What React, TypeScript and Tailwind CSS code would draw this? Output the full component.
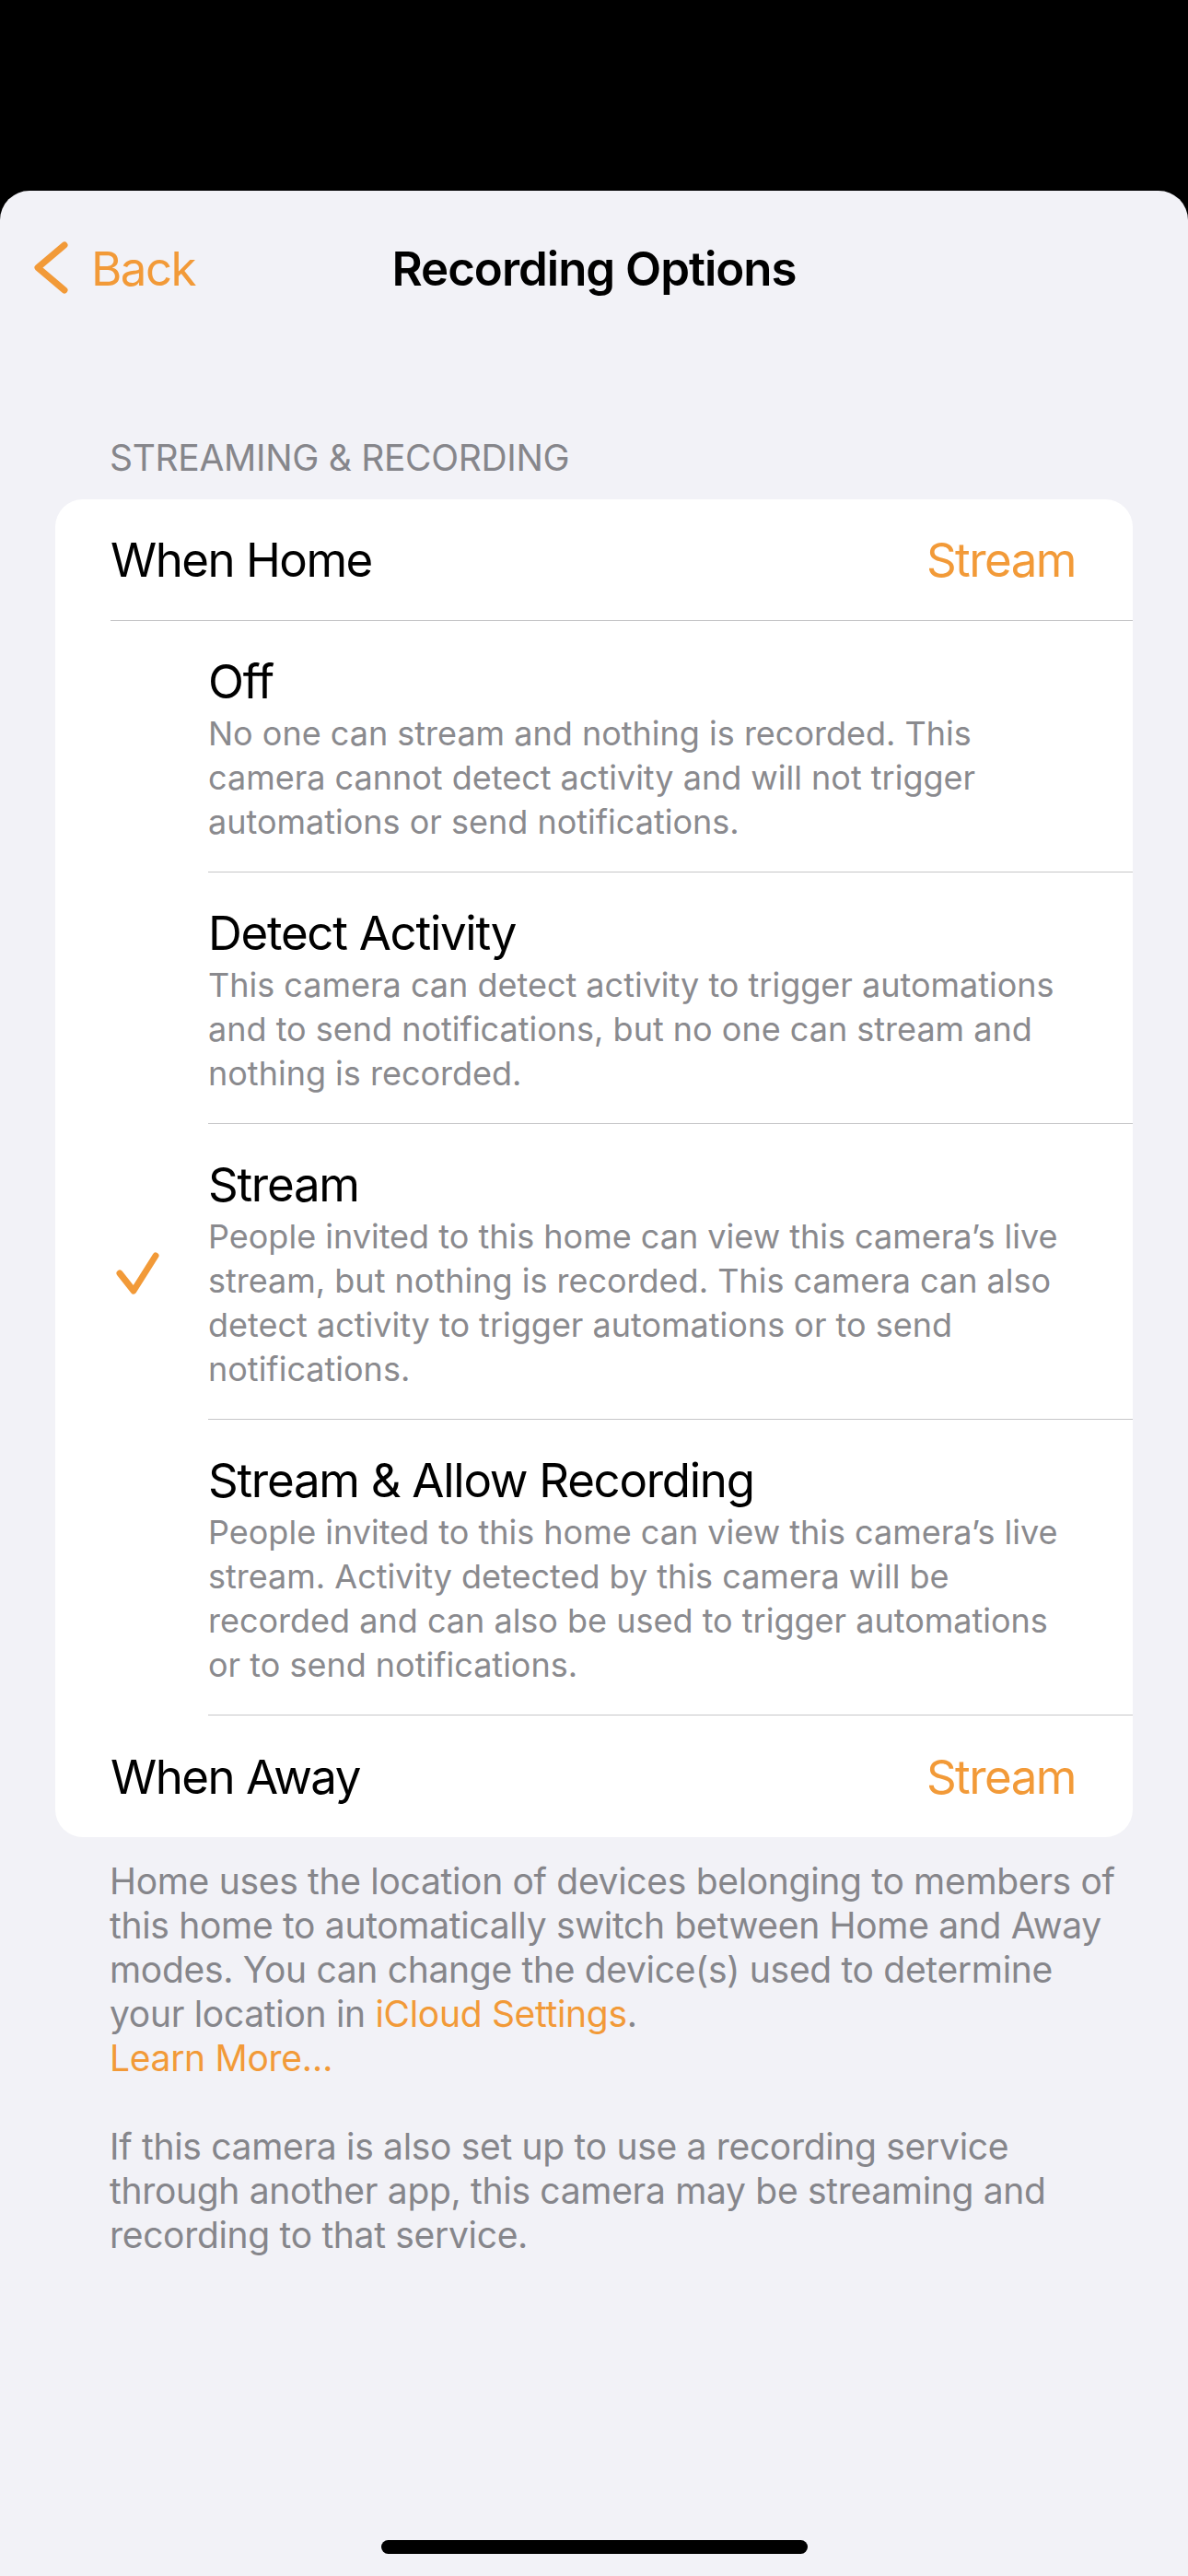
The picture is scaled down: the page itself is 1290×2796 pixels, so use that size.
import React from 'react';

const orange = 'text-[#f29a38]';

type Option = { title: string; lines: string[]; selected?: boolean };

const options: Option[] = [
  {
    title: 'Off',
    lines: [
      'No one can stream and nothing is recorded. This',
      'camera cannot detect activity and will not trigger',
      'automations or send notifications.',
    ],
  },
  {
    title: 'Detect Activity',
    lines: [
      'This camera can detect activity to trigger automations',
      'and to send notifications, but no one can stream and',
      'nothing is recorded.',
    ],
  },
  {
    title: 'Stream',
    selected: true,
    lines: [
      'People invited to this home can view this camera’s live',
      'stream, but nothing is recorded. This camera can also',
      'detect activity to trigger automations or to send',
      'notifications.',
    ],
  },
  {
    title: 'Stream & Allow Recording',
    lines: [
      'People invited to this home can view this camera’s live',
      'stream. Activity detected by this camera will be',
      'recorded and can also be used to trigger automations',
      'or to send notifications.',
    ],
  },
];

function Chevron() {
  return (
    <svg width="42" height="64" viewBox="0 0 42 64" className="shrink-0">
      <path d="M34 7 L5 31.5 L34 56" fill="none" stroke="#f29a38" strokeWidth="7" strokeLinecap="round" strokeLinejoin="round" />
    </svg>
  );
}

function Check() {
  return (
    <svg width="48" height="48" viewBox="0 0 48 48">
      <path d="M4 25 L19 44 L43 6" fill="none" stroke="#f29a38" strokeWidth="7" strokeLinecap="round" strokeLinejoin="round" />
    </svg>
  );
}

function ValueRow({ label, value, divider }: { label: string; value: string; divider?: boolean }) {
  return (
    <div className="pl-[60px]">
      <div className={`flex h-[132px] items-center justify-between pr-[62px] ${divider ? 'border-b border-[#c6c6c8]' : ''}`}>
        <span className="text-[51px] leading-[61px] tracking-[-0.03em] text-black">{label}</span>
        <span className={`text-[51px] leading-[61px] tracking-[-0.03em] ${orange}`}>{value}</span>
      </div>
    </div>
  );
}

function OptionRow({ option }: { option: Option }) {
  return (
    <div className="flex">
      <div className="flex w-[166px] shrink-0 items-center pl-[66px]">
        {option.selected && <Check />}
      </div>
      <div className="flex-1 border-b border-[#c6c6c8] pt-[33px] pb-[30px] pr-[40px]">
        <div className="text-[51px] leading-[65px] tracking-[-0.025em] text-black">{option.title}</div>
        <div className="text-[36px] leading-[48px] text-[#8a8a8e]">
          {option.lines.map((l) => (
            <div key={l} className="whitespace-nowrap">{l}</div>
          ))}
        </div>
      </div>
    </div>
  );
}

export default function App() {
  return (
    <div className="flex min-h-[2796px] flex-col bg-black font-['Inter','Noto_Sans',sans-serif] antialiased">
      <div className="h-[207px] shrink-0" />
      <div className="flex flex-1 flex-col rounded-t-[32px] bg-[#f2f2f7]">
        <div className="grid grid-cols-[1fr_auto_1fr] items-center pt-[52px]">
          <div className="flex items-center gap-[21px] pl-[36px]">
            <Chevron />
            <span className={`text-[51px] leading-[61px] tracking-[-0.03em] ${orange}`}>Back</span>
          </div>
          <div className="text-[51px] font-semibold leading-[61px] tracking-[-0.02em] text-black">Recording Options</div>
          <div />
        </div>

        <div className="mt-[150px] pl-[119px] text-[39px] leading-[48px] tracking-[-0.008em] text-[#86868b]">STREAMING &amp; RECORDING</div>

        <div className="mx-[60px] mt-[21px] overflow-hidden rounded-[30px] bg-white">
          <ValueRow label="When Home" value="Stream" divider />
          {options.map((o) => (
            <OptionRow key={o.title} option={o} />
          ))}
          <ValueRow label="When Away" value="Stream" />
        </div>

        <div className="mt-[24px] pl-[119px] text-[39px] leading-[48px] tracking-[-0.008em] text-[#86868b]">
          <div className="whitespace-nowrap">Home uses the location of devices belonging to members of</div>
          <div className="whitespace-nowrap">this home to automatically switch between Home and Away</div>
          <div className="whitespace-nowrap">modes. You can change the device(s) used to determine</div>
          <div className="whitespace-nowrap">
            your location in <span className={orange}>iCloud Settings</span>.
          </div>
          <div className={orange}>Learn More…</div>
          <div className="mt-[48px] whitespace-nowrap">If this camera is also set up to use a recording service</div>
          <div className="whitespace-nowrap">through another app, this camera may be streaming and</div>
          <div className="whitespace-nowrap">recording to that service.</div>
        </div>

        <div className="mt-auto flex justify-center pb-[24px]">
          <div className="h-[15px] w-[463px] rounded-full bg-black" />
        </div>
      </div>
    </div>
  );
}
